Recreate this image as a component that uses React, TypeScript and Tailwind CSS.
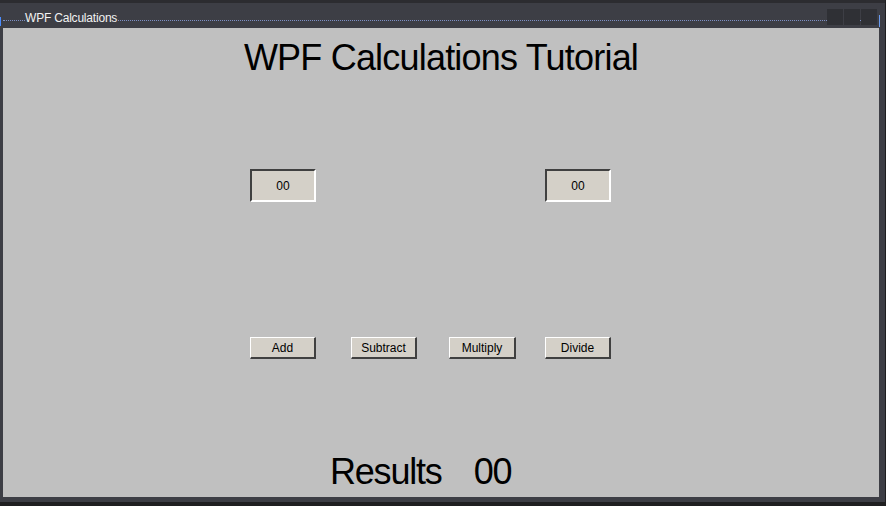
import React from 'react'

const ui = { fontFamily: '"Liberation Sans", Arial, sans-serif' }

function Field({ value }: { value: string }) {
  return (
    <div className="flex h-[33px] w-[66px] items-center justify-center border-2 border-t-[#404040] border-l-[#404040] border-r-white border-b-white bg-[#d4d0c8] text-[12px] text-black">
      {value}
    </div>
  )
}

function Btn({ label, w = 'w-[66px]' }: { label: string; w?: string }) {
  return (
    <button
      className={`flex h-[22px] ${w} items-center justify-center border-t border-l border-r-2 border-b-2 border-t-white border-l-white border-r-[#404040] border-b-[#404040] bg-[#d4d0c8] text-[12px] text-black`}
    >
      {label}
    </button>
  )
}

export default function App() {
  return (
    <div className="h-[506px] w-[886px] bg-[#1f1f21]" style={ui}>
      <div className="flex h-[502px] w-[885px] flex-col bg-[#3d3e45]">
        {/* title bar */}
        <div className="relative h-[28px] border-t-[3px] border-[#2c2c30]">
          <div className="absolute top-[14px] left-0 h-[9px] w-px bg-[#4a8cff]" />
          <div className="absolute top-[12px] left-[879px] h-[12px] w-px bg-[#6a9cf0]" />
          <div className="absolute top-[17px] left-[3px] w-[874px] border-b border-dotted border-[#7d8fc4]" />
          <span className="absolute top-[8px] left-[25px] bg-[#3d3e45] text-[12px] leading-[14px] tracking-[-0.2px] text-[#f2f2f2]">
            WPF Calculations
          </span>
          <div className="absolute top-[6px] left-[827px] flex gap-[1px]">
            <div className="h-[16px] w-[16px] bg-[#2f3035]" />
            <div className="h-[16px] w-[16px] bg-[#2f3035]" />
            <div className="h-[16px] w-[16px] bg-[#2f3035]" />
          </div>
        </div>

        {/* client area */}
        <div className="ml-[3px] flex h-[469px] w-[876px] flex-col bg-[#c0c0c0] text-black">
          <h1 className="mt-[12px] h-[36px] text-center text-[36px] leading-[36px] tracking-[-0.8px]">
            WPF Calculations Tutorial
          </h1>

          <div className="mt-[93px] flex">
            <div className="ml-[247px]">
              <Field value="00" />
            </div>
            <div className="ml-[229px]">
              <Field value="00" />
            </div>
          </div>

          <div className="mt-[135px] flex">
            <div className="ml-[247px]">
              <Btn label="Add" />
            </div>
            <div className="ml-[35px]">
              <Btn label="Subtract" />
            </div>
            <div className="ml-[32px]">
              <Btn label="Multiply" w="w-[67px]" />
            </div>
            <div className="ml-[29px]">
              <Btn label="Divide" />
            </div>
          </div>

          <div className="mt-[95px] ml-[327px] flex h-[36px] gap-[32px] text-[36px] leading-[36px] tracking-[-1.2px]">
            <span>Results</span>
            <span>00</span>
          </div>
        </div>
      </div>
    </div>
  )
}
